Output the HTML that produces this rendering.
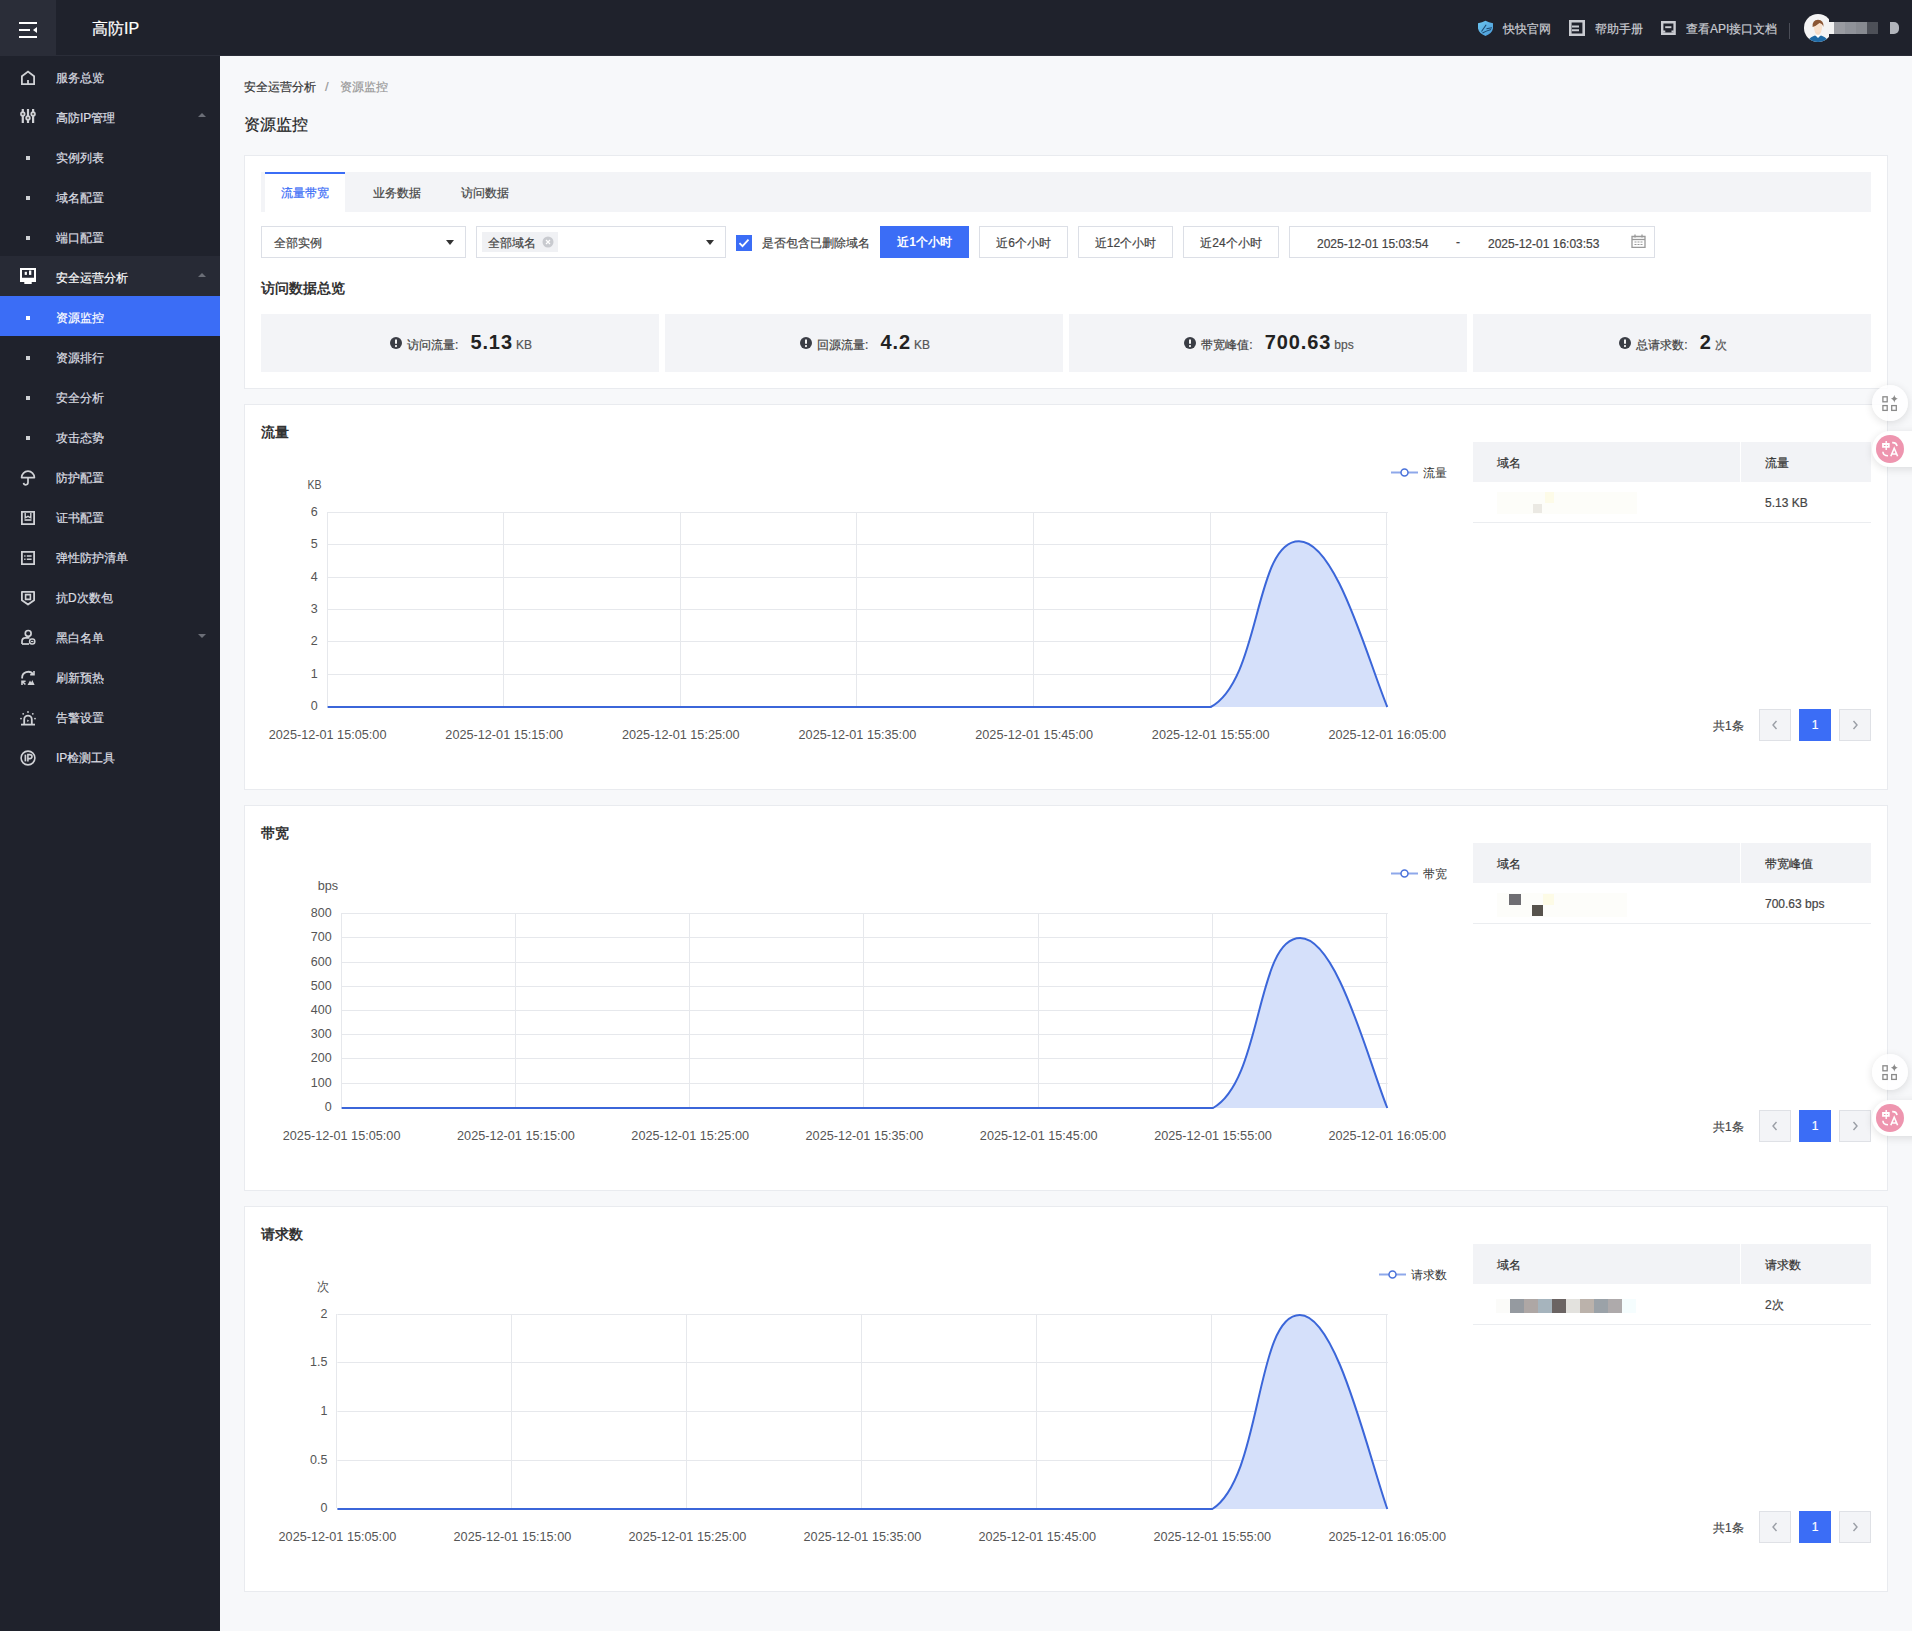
<!DOCTYPE html><html><head><meta charset="utf-8"><style>
*{margin:0;padding:0;box-sizing:border-box}
html,body{width:1912px;height:1631px;overflow:hidden}
body{-webkit-text-stroke:0.2px currentColor;background:#f7f8fa;font-family:"Liberation Sans",sans-serif;font-size:12px;color:#333;position:relative}
.a{position:absolute;white-space:nowrap}
.hdr{left:0;top:0;width:1912px;height:56px;background:#1f222c;border-bottom:1px solid #2a2d38}
.tog{left:0;top:0;width:56px;height:55px;background:#2a2d38}
.side{left:0;top:56px;width:220px;height:1575px;background:#1f222c}
.mi{left:56px;color:#dcdee2;font-size:12px;line-height:16px}
.bul{left:26px;width:4px;height:4px;background:#d0d2d6}
.caret{width:0;height:0;border-left:4px solid transparent;border-right:4px solid transparent}
.card{background:#fff;border:1px solid #e9ebef}
.t12{font-size:12px;line-height:16px}
.box{background:#fff;border:1px solid #dcdfe6}
.gray{background:#f3f4f7}
.nb{-webkit-text-stroke:0}
svg text{-webkit-text-stroke:0}
</style></head><body>
<div class="a hdr"></div>
<div class="a tog"></div>
<div class="a" style="left:19px;top:22px;width:18px;height:2px;background:#fff"></div>
<div class="a" style="left:19px;top:29px;width:11px;height:2px;background:#fff"></div>
<div class="a" style="left:19px;top:36px;width:18px;height:2px;background:#fff"></div>
<div class="a" style="left:33px;top:27px;width:0;height:0;border-top:3px solid transparent;border-bottom:3px solid transparent;border-right:4px solid #fff"></div>
<div class="a" style="left:92px;top:19px;font-size:16px;line-height:20px;color:#fff">高防IP</div>
<svg class="a" style="left:1477px;top:20px" width="17" height="17" viewBox="0 0 17 17"><defs><linearGradient id="sg" x1="0" y1="0" x2="1" y2="1"><stop offset="0" stop-color="#6cc6f0"/><stop offset="1" stop-color="#4a9ad8"/></linearGradient></defs><path d="M1 3.2L5 2.2 8.5 0.8 12 2.2 16 3.2V8.5Q15 13.5 8.5 16Q2 13.5 1 8.5Z" fill="url(#sg)"/><path d="M4.5 11.5L9.2 4.8M5.5 13Q9 11 14 9.5M9.5 8.8Q12 8.3 15 7.8" stroke="#1d4a70" stroke-width="1.1" fill="none"/></svg>
<div class="a t12" style="left:1503px;top:21px;color:#c9cbd1">快快官网</div>
<svg class="a" style="left:1569px;top:20px" width="16" height="16" viewBox="0 0 16 16"><path d="M1.3 1.3h13.4v13.4h-13.4z" stroke="#c9cbd1" stroke-width="2.6" fill="none"/><path d="M3 6.5h7M3 10.3h7" stroke="#c9cbd1" stroke-width="1.9"/></svg>
<div class="a t12" style="left:1595px;top:21px;color:#c9cbd1">帮助手册</div>
<svg class="a" style="left:1661px;top:21px" width="15" height="14" viewBox="0 0 15 14"><path d="M1.2 1.2h12.4v11.6h-12.4z" stroke="#c9cbd1" stroke-width="2.4" fill="none"/><path d="M4.2 6.2h6.2" stroke="#c9cbd1" stroke-width="1.9"/><path d="M2 10.6h2.3M10.5 10.6h2.3" stroke="#c9cbd1" stroke-width="2"/></svg>
<div class="a t12" style="left:1686px;top:21px;color:#c9cbd1">查看API接口文档</div>
<div class="a" style="left:1789px;top:23px;width:1px;height:16px;background:#4a4d57"></div>
<svg class="a" style="left:1804px;top:14px" width="28" height="28" viewBox="0 0 28 28"><defs><clipPath id="av"><circle cx="14" cy="14" r="14"/></clipPath></defs><g clip-path="url(#av)"><rect width="28" height="28" fill="#f4f4f4"/><path d="M3 29 Q5 22 14 21 Q23 22 25 29Z" fill="#1f6aa5"/><path d="M11 21 L14 24 L17 21Z" fill="#fff"/><path d="M10.5 15 Q10.5 20 14 21 Q17.5 20 17.5 15Z" fill="#f6dcc6"/><ellipse cx="14" cy="13" rx="4.2" ry="5.2" fill="#f8e1cd"/><path d="M8.6 13 Q8 6 14 5.8 Q20 6 19.4 13 Q18.5 9.5 15.5 9 Q12 12 8.6 13Z" fill="#8b5633"/></g></svg>
<div class="a" style="left:1829px;top:12px;width:6px;height:10px;background:#1f222c"></div><div class="a" style="left:1829px;top:34px;width:6px;height:10px;background:#1f222c"></div>
<div class="a" style="left:1827px;top:22px;width:7px;height:12px;background:#f3f3f3"></div>
<div class="a" style="left:1834px;top:22px;width:11px;height:12px;background:#999ba1"></div>
<div class="a" style="left:1845px;top:22px;width:11px;height:12px;background:#8f9299"></div>
<div class="a" style="left:1856px;top:22px;width:11px;height:12px;background:#878a91"></div>
<div class="a" style="left:1867px;top:22px;width:11px;height:12px;background:#4d5058"></div>
<div class="a" style="left:1890px;top:22px;width:9px;height:12px;background:#b1b4bb;border-radius:0 5px 5px 0"></div>
<div class="a side"></div>
<div class="a" style="left:0;top:256px;width:220px;height:40px;background:#272a35"></div>
<div class="a" style="left:0;top:296px;width:220px;height:40px;background:#3b6df6"></div>
<div class="a mi" style="top:70px;color:#dcdee2">服务总览</div>
<svg class="a" style="left:20px;top:70px" width="16" height="16" viewBox="0 0 16 16"><path d="M1.9 14.1V6.2L8 1.6L14.1 6.2V14.1Z" stroke="#d0d2d6" stroke-width="1.8" fill="none"/><path d="M8 14V10" stroke="#d0d2d6" stroke-width="1.8"/></svg>
<div class="a mi" style="top:110px;color:#dcdee2">高防IP管理</div>
<svg class="a" style="left:20px;top:108px" width="16" height="16" viewBox="0 0 16 16"><path d="M2.8 1v14M8 1v14M13.1 1v14" stroke="#d0d2d6" stroke-width="2.2"/><circle cx="2.8" cy="6" r="1.9" fill="#555" stroke="#d0d2d6" stroke-width="1.6"/><circle cx="8" cy="10" r="1.9" fill="#555" stroke="#d0d2d6" stroke-width="1.6"/><circle cx="13.1" cy="6" r="1.9" fill="#555" stroke="#d0d2d6" stroke-width="1.6"/></svg>
<div class="a caret" style="left:198px;top:113px;border-bottom:4px solid #6b6e77"></div>
<div class="a mi" style="top:150px;color:#dcdee2">实例列表</div>
<div class="a bul" style="top:156px"></div>
<div class="a mi" style="top:190px;color:#dcdee2">域名配置</div>
<div class="a bul" style="top:196px"></div>
<div class="a mi" style="top:230px;color:#dcdee2">端口配置</div>
<div class="a bul" style="top:236px"></div>
<div class="a mi" style="top:270px;color:#fff">安全运营分析</div>
<svg class="a" style="left:20px;top:268px" width="16" height="16" viewBox="0 0 16 16"><path d="M0 0h16v14h-16z M2 2v7.8h12v-7.8z" fill="#fff" fill-rule="evenodd"/><rect x="4.7" y="3.8" width="2.2" height="3.1" fill="#fff"/><rect x="9" y="2.5" width="2.3" height="4.4" fill="#fff"/><rect x="4.3" y="13" width="7.4" height="3" fill="#fff"/></svg>
<div class="a caret" style="left:198px;top:273px;border-bottom:4px solid #6b6e77"></div>
<div class="a mi" style="top:310px;color:#fff">资源监控</div>
<div class="a bul" style="top:316px;background:#fff"></div>
<div class="a mi" style="top:350px;color:#dcdee2">资源排行</div>
<div class="a bul" style="top:356px"></div>
<div class="a mi" style="top:390px;color:#dcdee2">安全分析</div>
<div class="a bul" style="top:396px"></div>
<div class="a mi" style="top:430px;color:#dcdee2">攻击态势</div>
<div class="a bul" style="top:436px"></div>
<div class="a mi" style="top:470px;color:#dcdee2">防护配置</div>
<svg class="a" style="left:20px;top:470px" width="16" height="16" viewBox="0 0 16 16"><path d="M1.6 7.6 A6.4 6.4 0 0 1 14.4 7.6 Z" stroke="#d0d2d6" stroke-width="1.7" fill="none" stroke-linejoin="round"/><path d="M8 7.6V12.6 Q8 14.8 5.8 14.8 Q3.8 14.8 3.6 12.8" stroke="#d0d2d6" stroke-width="1.7" fill="none"/></svg>
<div class="a mi" style="top:510px;color:#dcdee2">证书配置</div>
<svg class="a" style="left:20px;top:510px" width="16" height="16" viewBox="0 0 16 16"><path d="M1.9 1.9h12.2v12.2h-12.2z" stroke="#d0d2d6" stroke-width="1.8" fill="none"/><path d="M5.2 3V7.8L8 6.3L10.8 7.8V3" stroke="#d0d2d6" stroke-width="1.4" fill="none"/><path d="M4.5 10h7" stroke="#d0d2d6" stroke-width="1.6"/></svg>
<div class="a mi" style="top:550px;color:#dcdee2">弹性防护清单</div>
<svg class="a" style="left:20px;top:550px" width="16" height="16" viewBox="0 0 16 16"><path d="M1.9 1.9h12.2v12.2h-12.2z" stroke="#d0d2d6" stroke-width="1.8" fill="none"/><path d="M4.2 6h1.3M6.8 6h4.8M4.2 9.3h1.3M6.8 9.3h4.8" stroke="#d0d2d6" stroke-width="1.6"/></svg>
<div class="a mi" style="top:590px;color:#dcdee2">抗D次数包</div>
<svg class="a" style="left:20px;top:590px" width="16" height="16" viewBox="0 0 16 16"><path d="M1.9 1.9H14.1V10.2L8 14.6L1.9 10.2Z" stroke="#d0d2d6" stroke-width="1.8" fill="none" stroke-linejoin="round"/><path d="M5.6 4.6h4.8v4.8h-4.8z" stroke="#d0d2d6" stroke-width="1.6" fill="none"/></svg>
<div class="a mi" style="top:630px;color:#dcdee2">黑白名单</div>
<svg class="a" style="left:20px;top:629px" width="16" height="16" viewBox="0 0 16 16"><circle cx="8.2" cy="4.4" r="2.9" stroke="#d0d2d6" stroke-width="1.7" fill="none"/><path d="M2 15V12.2 Q2 8.8 5.5 8.8H9.5" stroke="#d0d2d6" stroke-width="1.7" fill="none"/><path d="M2 15h7" stroke="#d0d2d6" stroke-width="1.7"/><rect x="9.6" y="10" width="5.2" height="5" rx="2.2" stroke="#d0d2d6" stroke-width="1.5" fill="none"/><path d="M11 12.5h2.4" stroke="#d0d2d6" stroke-width="1.2"/></svg>
<div class="a caret" style="left:198px;top:634px;border-top:4px solid #6b6e77"></div>
<div class="a mi" style="top:670px;color:#dcdee2">刷新预热</div>
<svg class="a" style="left:20px;top:670px" width="16" height="16" viewBox="0 0 16 16"><path d="M2.2 8.5 A6 6 0 0 1 13.2 4.6" stroke="#d0d2d6" stroke-width="1.8" fill="none"/><path d="M10.2 4.6h3.8V1" stroke="#d0d2d6" stroke-width="1.6" fill="none"/><path d="M2 15V11.2h3.6M2.4 11.5l3 3" stroke="#d0d2d6" stroke-width="1.6" fill="none"/><path d="M7.5 15L10 10.5 11.2 12.5 12.3 10 14.6 15Z" fill="#d0d2d6"/></svg>
<div class="a mi" style="top:710px;color:#dcdee2">告警设置</div>
<svg class="a" style="left:20px;top:710px" width="16" height="16" viewBox="0 0 16 16"><path d="M4.2 14V9.4 A3.8 3.8 0 0 1 11.8 9.4V14" stroke="#d0d2d6" stroke-width="1.8" fill="none"/><path d="M1 14.6h14" stroke="#d0d2d6" stroke-width="1.8"/><circle cx="8" cy="2" r="0.9" fill="#d0d2d6"/><circle cx="3.2" cy="3.8" r="0.9" fill="#d0d2d6"/><circle cx="12.8" cy="3.8" r="0.9" fill="#d0d2d6"/><circle cx="1" cy="8.6" r="0.9" fill="#d0d2d6"/><circle cx="15" cy="8.6" r="0.9" fill="#d0d2d6"/><path d="M7.2 9.5l2 1.2-2 1.2z" fill="#d0d2d6"/></svg>
<div class="a mi" style="top:750px;color:#dcdee2">IP检测工具</div>
<svg class="a" style="left:20px;top:750px" width="16" height="16" viewBox="0 0 16 16"><circle cx="8" cy="8" r="6.9" stroke="#d0d2d6" stroke-width="1.6" fill="none"/><path d="M5.4 4.6v6.8" stroke="#d0d2d6" stroke-width="1.7"/><path d="M7.9 11.4V4.6h1.9 Q12 4.6 12 6.6 Q12 8.6 9.8 8.6H7.9" stroke="#d0d2d6" stroke-width="1.6" fill="none"/></svg>
<div class="a t12" style="left:244px;top:79px;color:#333">安全运营分析</div>
<div class="a t12" style="left:325px;top:79px;color:#999;font-size:13px">/</div>
<div class="a t12" style="left:340px;top:79px;color:#999">资源监控</div>
<div class="a" style="left:244px;top:115px;font-size:16px;line-height:20px;color:#222">资源监控</div>
<div class="a card" style="left:244px;top:155px;width:1644px;height:234px"></div>
<div class="a gray" style="left:261px;top:172px;width:1610px;height:40px"></div>
<div class="a" style="left:265px;top:172px;width:80px;height:40px;background:#fff;border-top:2px solid #3b6df6"></div>
<div class="a t12" style="left:281px;top:185px;color:#3b6df6">流量带宽</div>
<div class="a t12" style="left:373px;top:185px;color:#444">业务数据</div>
<div class="a t12" style="left:461px;top:185px;color:#444">访问数据</div>
<div class="a box" style="left:261px;top:226px;width:205px;height:32px"></div>
<div class="a t12" style="left:274px;top:235px;color:#444">全部实例</div>
<div class="a caret" style="left:446px;top:240px;border-top:5px solid #333"></div>
<div class="a box" style="left:476px;top:226px;width:250px;height:32px"></div>
<div class="a" style="left:482px;top:232px;width:76px;height:20px;background:#f0f1f4"></div>
<div class="a t12" style="left:488px;top:235px;color:#444">全部域名</div>
<svg class="a" style="left:542px;top:236px" width="12" height="12" viewBox="0 0 12 12"><circle cx="6" cy="6" r="5.5" fill="#c8cacf"/><path d="M4 4l4 4M8 4l-4 4" stroke="#fff" stroke-width="1.2"/></svg>
<div class="a caret" style="left:706px;top:240px;border-top:5px solid #333"></div>
<svg class="a" style="left:736px;top:235px" width="16" height="16" viewBox="0 0 16 16"><rect width="16" height="16" fill="#3b6df6"/><path d="M3.5 8.2l3 3 6-6.5" stroke="#fff" stroke-width="1.8" fill="none"/></svg>
<div class="a t12" style="left:762px;top:235px;color:#444">是否包含已删除域名</div>
<div class="a t12" style="left:880px;top:226px;width:89px;height:32px;background:#3b6df6;color:#fff;font-weight:bold;-webkit-text-stroke:0;text-align:center;line-height:33px">近1个小时</div>
<div class="a box t12" style="left:979px;top:226px;width:89px;height:32px;color:#444;text-align:center;line-height:32px">近6个小时</div>
<div class="a box t12" style="left:1078px;top:226px;width:95px;height:32px;color:#444;text-align:center;line-height:32px">近12个小时</div>
<div class="a box t12" style="left:1183px;top:226px;width:96px;height:32px;color:#444;text-align:center;line-height:32px">近24个小时</div>
<div class="a box" style="left:1289px;top:226px;width:366px;height:32px"></div>
<div class="a t12" style="left:1317px;top:236px;color:#444">2025-12-01 15:03:54</div>
<div class="a t12" style="left:1456px;top:234px;color:#444">-</div>
<div class="a t12" style="left:1488px;top:236px;color:#444">2025-12-01 16:03:53</div>
<svg class="a" style="left:1631px;top:234px" width="15" height="14" viewBox="0 0 15 14"><path d="M1 2.5h13v11h-13z" stroke="#999" stroke-width="1.3" fill="none"/><path d="M1 5.5h13" stroke="#999" stroke-width="1.3"/><path d="M4 0.5v3M11 0.5v3" stroke="#999" stroke-width="1.3"/><path d="M3.5 8h2M6.5 8h2M9.5 8h2M3.5 10.5h2M6.5 10.5h2M9.5 10.5h2" stroke="#999" stroke-width="1"/></svg>
<div class="a" style="left:261px;top:279px;font-size:14px;line-height:18px;font-weight:bold;color:#333;-webkit-text-stroke:0">访问数据总览</div>
<div class="a gray" style="left:261px;top:314px;width:398px;height:58px"></div>
<div class="a" style="left:262px;top:329.5px;width:398px;height:24px;display:flex;align-items:baseline;justify-content:center;line-height:24px"><svg width="12" height="12" viewBox="0 0 12 12" style="margin-right:5px;align-self:center;margin-top:3px"><circle cx="6" cy="6" r="6" fill="#3a3d45"/><path d="M6 2.4v4.4" stroke="#fff" stroke-width="1.9"/><circle cx="6" cy="9.1" r="1.05" fill="#fff"/></svg><span style="font-size:12px;color:#444">访问流量:</span><span style="font-size:20px;font-weight:bold;color:#222;-webkit-text-stroke:0;margin-left:12px;letter-spacing:0.9px">5.13</span><span style="font-size:12px;color:#555;margin-left:3px">KB</span></div>
<div class="a gray" style="left:665px;top:314px;width:398px;height:58px"></div>
<div class="a" style="left:666px;top:329.5px;width:398px;height:24px;display:flex;align-items:baseline;justify-content:center;line-height:24px"><svg width="12" height="12" viewBox="0 0 12 12" style="margin-right:5px;align-self:center;margin-top:3px"><circle cx="6" cy="6" r="6" fill="#3a3d45"/><path d="M6 2.4v4.4" stroke="#fff" stroke-width="1.9"/><circle cx="6" cy="9.1" r="1.05" fill="#fff"/></svg><span style="font-size:12px;color:#444">回源流量:</span><span style="font-size:20px;font-weight:bold;color:#222;-webkit-text-stroke:0;margin-left:12px;letter-spacing:0.9px">4.2</span><span style="font-size:12px;color:#555;margin-left:3px">KB</span></div>
<div class="a gray" style="left:1069px;top:314px;width:398px;height:58px"></div>
<div class="a" style="left:1070px;top:329.5px;width:398px;height:24px;display:flex;align-items:baseline;justify-content:center;line-height:24px"><svg width="12" height="12" viewBox="0 0 12 12" style="margin-right:5px;align-self:center;margin-top:3px"><circle cx="6" cy="6" r="6" fill="#3a3d45"/><path d="M6 2.4v4.4" stroke="#fff" stroke-width="1.9"/><circle cx="6" cy="9.1" r="1.05" fill="#fff"/></svg><span style="font-size:12px;color:#444">带宽峰值:</span><span style="font-size:20px;font-weight:bold;color:#222;-webkit-text-stroke:0;margin-left:12px;letter-spacing:0.9px">700.63</span><span style="font-size:12px;color:#555;margin-left:3px">bps</span></div>
<div class="a gray" style="left:1473px;top:314px;width:398px;height:58px"></div>
<div class="a" style="left:1474px;top:329.5px;width:398px;height:24px;display:flex;align-items:baseline;justify-content:center;line-height:24px"><svg width="12" height="12" viewBox="0 0 12 12" style="margin-right:5px;align-self:center;margin-top:3px"><circle cx="6" cy="6" r="6" fill="#3a3d45"/><path d="M6 2.4v4.4" stroke="#fff" stroke-width="1.9"/><circle cx="6" cy="9.1" r="1.05" fill="#fff"/></svg><span style="font-size:12px;color:#444">总请求数:</span><span style="font-size:20px;font-weight:bold;color:#222;-webkit-text-stroke:0;margin-left:12px;letter-spacing:0.9px">2</span><span style="font-size:12px;color:#555;margin-left:3px">次</span></div>
<div class="a card" style="left:244px;top:404px;width:1644px;height:386px"></div>
<div class="a" style="left:261px;top:423px;font-size:14px;line-height:18px;font-weight:bold;color:#333;-webkit-text-stroke:0">流量</div>
<svg class="a" style="left:244px;top:405px" width="1240" height="385" viewBox="244 405 1240 385">
<path d="M327.6 512.5H1387.8" stroke="#e6e8ec" stroke-width="1"/>
<path d="M327.6 544.5H1387.8" stroke="#e6e8ec" stroke-width="1"/>
<path d="M327.6 577.5H1387.8" stroke="#e6e8ec" stroke-width="1"/>
<path d="M327.6 609.5H1387.8" stroke="#e6e8ec" stroke-width="1"/>
<path d="M327.6 641.5H1387.8" stroke="#e6e8ec" stroke-width="1"/>
<path d="M327.6 674.5H1387.8" stroke="#e6e8ec" stroke-width="1"/>
<path d="M327.6 706.5H1387.8" stroke="#e6e8ec" stroke-width="1"/>
<path d="M327.5 512.0V706.0" stroke="#e6e8ec" stroke-width="1"/>
<path d="M503.5 512.0V706.0" stroke="#e6e8ec" stroke-width="1"/>
<path d="M680.5 512.0V706.0" stroke="#e6e8ec" stroke-width="1"/>
<path d="M856.5 512.0V706.0" stroke="#e6e8ec" stroke-width="1"/>
<path d="M1033.5 512.0V706.0" stroke="#e6e8ec" stroke-width="1"/>
<path d="M1210.5 512.0V706.0" stroke="#e6e8ec" stroke-width="1"/>
<path d="M1386.5 512.0V706.0" stroke="#e6e8ec" stroke-width="1"/>
<text x="317.6" y="709.8" text-anchor="end" font-family="Liberation Sans" font-size="12.5" fill="#555">0</text>
<text x="317.6" y="677.8" text-anchor="end" font-family="Liberation Sans" font-size="12.5" fill="#555">1</text>
<text x="317.6" y="644.8" text-anchor="end" font-family="Liberation Sans" font-size="12.5" fill="#555">2</text>
<text x="317.6" y="612.8" text-anchor="end" font-family="Liberation Sans" font-size="12.5" fill="#555">3</text>
<text x="317.6" y="580.8" text-anchor="end" font-family="Liberation Sans" font-size="12.5" fill="#555">4</text>
<text x="317.6" y="547.8" text-anchor="end" font-family="Liberation Sans" font-size="12.5" fill="#555">5</text>
<text x="317.6" y="515.8" text-anchor="end" font-family="Liberation Sans" font-size="12.5" fill="#555">6</text>
<text x="327.6" y="738.5" text-anchor="middle" font-family="Liberation Sans" font-size="12.5" fill="#555" textLength="117.7" lengthAdjust="spacingAndGlyphs">2025-12-01 15:05:00</text>
<text x="504.2" y="738.5" text-anchor="middle" font-family="Liberation Sans" font-size="12.5" fill="#555" textLength="117.7" lengthAdjust="spacingAndGlyphs">2025-12-01 15:15:00</text>
<text x="680.8" y="738.5" text-anchor="middle" font-family="Liberation Sans" font-size="12.5" fill="#555" textLength="117.7" lengthAdjust="spacingAndGlyphs">2025-12-01 15:25:00</text>
<text x="857.4" y="738.5" text-anchor="middle" font-family="Liberation Sans" font-size="12.5" fill="#555" textLength="117.7" lengthAdjust="spacingAndGlyphs">2025-12-01 15:35:00</text>
<text x="1034.1" y="738.5" text-anchor="middle" font-family="Liberation Sans" font-size="12.5" fill="#555" textLength="117.7" lengthAdjust="spacingAndGlyphs">2025-12-01 15:45:00</text>
<text x="1210.7" y="738.5" text-anchor="middle" font-family="Liberation Sans" font-size="12.5" fill="#555" textLength="117.7" lengthAdjust="spacingAndGlyphs">2025-12-01 15:55:00</text>
<text x="1387.3" y="738.5" text-anchor="middle" font-family="Liberation Sans" font-size="12.5" fill="#555" textLength="117.7" lengthAdjust="spacingAndGlyphs">2025-12-01 16:05:00</text>
<text x="307.5" y="489" font-family="Liberation Sans" font-size="12.5" fill="#555" textLength="14.1" lengthAdjust="spacingAndGlyphs">KB</text>
<path d="M1210.68,707.00 C1261.27,679.66 1253.93,541.13 1298.99,541.13 C1336.04,541.13 1366.98,657.59 1387.30,707.00 Z" fill="#d5e0fa"/>
<path d="M327.6,707.00 L1210.68,707.00 1210.68,707.00 C1261.27,679.66 1253.93,541.13 1298.99,541.13 C1336.04,541.13 1366.98,657.59 1387.30,707.00" stroke="#3b66d9" stroke-width="2" fill="none"/>
<path d="M1391 472.5h27" stroke="#8ea8ea" stroke-width="2"/>
<circle cx="1404.5" cy="472.5" r="3.5" fill="#fff" stroke="#4a72da" stroke-width="1.5"/>
<text x="1423" y="477.0" font-family="Liberation Sans" font-size="12" fill="#333">流量</text>
</svg>
<div class="a" style="left:1473px;top:442px;width:398px;height:40px;background:#f2f3f6"></div>
<div class="a" style="left:1740px;top:442px;width:1px;height:80px;background:#fff"></div>
<div class="a t12" style="left:1497px;top:455px;color:#333">域名</div>
<div class="a t12" style="left:1765px;top:455px;color:#333">流量</div>
<div class="a" style="left:1473px;top:522px;width:398px;height:1px;background:#ebedf0"></div>
<div class="a t12" style="left:1765px;top:495px;color:#444">5.13 KB</div>
<div class="a" style="left:1497px;top:492px;width:140px;height:22px;background:#fdfdf9"></div><div class="a" style="left:1533px;top:504px;width:9px;height:9px;background:#ebe9e3"></div><div class="a" style="left:1545px;top:492px;width:9px;height:11px;background:#fdfbe8"></div>
<div class="a t12" style="left:1713px;top:718px;color:#444">共1条</div>
<div class="a" style="left:1759px;top:709px;width:32px;height:32px;background:#f3f4f7;border:1px solid #dfe1e6"></div>
<svg class="a" style="left:1770px;top:720px" width="10" height="10" viewBox="0 0 10 10"><path d="M6.5 1L3 5l3.5 4" stroke="#9a9ea6" stroke-width="1.4" fill="none"/></svg>
<div class="a t12" style="left:1799px;top:709px;width:32px;height:32px;background:#3b6df6;color:#fff;text-align:center;line-height:32px">1</div>
<div class="a" style="left:1839px;top:709px;width:32px;height:32px;background:#f3f4f7;border:1px solid #dfe1e6"></div>
<svg class="a" style="left:1850px;top:720px" width="10" height="10" viewBox="0 0 10 10"><path d="M3.5 1L7 5l-3.5 4" stroke="#9a9ea6" stroke-width="1.4" fill="none"/></svg>
<div class="a card" style="left:244px;top:805px;width:1644px;height:386px"></div>
<div class="a" style="left:261px;top:824px;font-size:14px;line-height:18px;font-weight:bold;color:#333;-webkit-text-stroke:0">带宽</div>
<svg class="a" style="left:244px;top:806px" width="1240" height="385" viewBox="244 806 1240 385">
<path d="M341.6 913.5H1387.8" stroke="#e6e8ec" stroke-width="1"/>
<path d="M341.6 937.5H1387.8" stroke="#e6e8ec" stroke-width="1"/>
<path d="M341.6 962.5H1387.8" stroke="#e6e8ec" stroke-width="1"/>
<path d="M341.6 986.5H1387.8" stroke="#e6e8ec" stroke-width="1"/>
<path d="M341.6 1010.5H1387.8" stroke="#e6e8ec" stroke-width="1"/>
<path d="M341.6 1034.5H1387.8" stroke="#e6e8ec" stroke-width="1"/>
<path d="M341.6 1058.5H1387.8" stroke="#e6e8ec" stroke-width="1"/>
<path d="M341.6 1083.5H1387.8" stroke="#e6e8ec" stroke-width="1"/>
<path d="M341.6 1107.5H1387.8" stroke="#e6e8ec" stroke-width="1"/>
<path d="M341.5 913.0V1107.0" stroke="#e6e8ec" stroke-width="1"/>
<path d="M515.5 913.0V1107.0" stroke="#e6e8ec" stroke-width="1"/>
<path d="M689.5 913.0V1107.0" stroke="#e6e8ec" stroke-width="1"/>
<path d="M863.5 913.0V1107.0" stroke="#e6e8ec" stroke-width="1"/>
<path d="M1038.5 913.0V1107.0" stroke="#e6e8ec" stroke-width="1"/>
<path d="M1212.5 913.0V1107.0" stroke="#e6e8ec" stroke-width="1"/>
<path d="M1386.5 913.0V1107.0" stroke="#e6e8ec" stroke-width="1"/>
<text x="331.6" y="1110.8" text-anchor="end" font-family="Liberation Sans" font-size="12.5" fill="#555">0</text>
<text x="331.6" y="1086.8" text-anchor="end" font-family="Liberation Sans" font-size="12.5" fill="#555">100</text>
<text x="331.6" y="1061.8" text-anchor="end" font-family="Liberation Sans" font-size="12.5" fill="#555">200</text>
<text x="331.6" y="1037.8" text-anchor="end" font-family="Liberation Sans" font-size="12.5" fill="#555">300</text>
<text x="331.6" y="1013.8" text-anchor="end" font-family="Liberation Sans" font-size="12.5" fill="#555">400</text>
<text x="331.6" y="989.8" text-anchor="end" font-family="Liberation Sans" font-size="12.5" fill="#555">500</text>
<text x="331.6" y="965.8" text-anchor="end" font-family="Liberation Sans" font-size="12.5" fill="#555">600</text>
<text x="331.6" y="940.8" text-anchor="end" font-family="Liberation Sans" font-size="12.5" fill="#555">700</text>
<text x="331.6" y="916.8" text-anchor="end" font-family="Liberation Sans" font-size="12.5" fill="#555">800</text>
<text x="341.6" y="1139.5" text-anchor="middle" font-family="Liberation Sans" font-size="12.5" fill="#555" textLength="117.7" lengthAdjust="spacingAndGlyphs">2025-12-01 15:05:00</text>
<text x="515.9" y="1139.5" text-anchor="middle" font-family="Liberation Sans" font-size="12.5" fill="#555" textLength="117.7" lengthAdjust="spacingAndGlyphs">2025-12-01 15:15:00</text>
<text x="690.2" y="1139.5" text-anchor="middle" font-family="Liberation Sans" font-size="12.5" fill="#555" textLength="117.7" lengthAdjust="spacingAndGlyphs">2025-12-01 15:25:00</text>
<text x="864.4" y="1139.5" text-anchor="middle" font-family="Liberation Sans" font-size="12.5" fill="#555" textLength="117.7" lengthAdjust="spacingAndGlyphs">2025-12-01 15:35:00</text>
<text x="1038.7" y="1139.5" text-anchor="middle" font-family="Liberation Sans" font-size="12.5" fill="#555" textLength="117.7" lengthAdjust="spacingAndGlyphs">2025-12-01 15:45:00</text>
<text x="1213.0" y="1139.5" text-anchor="middle" font-family="Liberation Sans" font-size="12.5" fill="#555" textLength="117.7" lengthAdjust="spacingAndGlyphs">2025-12-01 15:55:00</text>
<text x="1387.3" y="1139.5" text-anchor="middle" font-family="Liberation Sans" font-size="12.5" fill="#555" textLength="117.7" lengthAdjust="spacingAndGlyphs">2025-12-01 16:05:00</text>
<text x="317.7" y="890" font-family="Liberation Sans" font-size="12.5" fill="#555" textLength="20.4" lengthAdjust="spacingAndGlyphs">bps</text>
<path d="M1213.02,1108.00 C1262.93,1080.00 1255.69,938.10 1300.16,938.10 C1336.72,938.10 1367.25,1057.38 1387.30,1108.00 Z" fill="#d5e0fa"/>
<path d="M341.6,1108.00 L1213.02,1108.00 1213.02,1108.00 C1262.93,1080.00 1255.69,938.10 1300.16,938.10 C1336.72,938.10 1367.25,1057.38 1387.30,1108.00" stroke="#3b66d9" stroke-width="2" fill="none"/>
<path d="M1391 873.5h27" stroke="#8ea8ea" stroke-width="2"/>
<circle cx="1404.5" cy="873.5" r="3.5" fill="#fff" stroke="#4a72da" stroke-width="1.5"/>
<text x="1423" y="878.0" font-family="Liberation Sans" font-size="12" fill="#333">带宽</text>
</svg>
<div class="a" style="left:1473px;top:843px;width:398px;height:40px;background:#f2f3f6"></div>
<div class="a" style="left:1740px;top:843px;width:1px;height:80px;background:#fff"></div>
<div class="a t12" style="left:1497px;top:856px;color:#333">域名</div>
<div class="a t12" style="left:1765px;top:856px;color:#333">带宽峰值</div>
<div class="a" style="left:1473px;top:923px;width:398px;height:1px;background:#ebedf0"></div>
<div class="a t12" style="left:1765px;top:896px;color:#444">700.63 bps</div>
<div class="a" style="left:1497px;top:893px;width:130px;height:24px;background:#fdfdfa"></div><div class="a" style="left:1509px;top:894px;width:12px;height:11px;background:#6f6e73"></div><div class="a" style="left:1532px;top:905px;width:11px;height:11px;background:#57534d"></div><div class="a" style="left:1543px;top:894px;width:11px;height:11px;background:#fdfbe6"></div>
<div class="a t12" style="left:1713px;top:1119px;color:#444">共1条</div>
<div class="a" style="left:1759px;top:1110px;width:32px;height:32px;background:#f3f4f7;border:1px solid #dfe1e6"></div>
<svg class="a" style="left:1770px;top:1121px" width="10" height="10" viewBox="0 0 10 10"><path d="M6.5 1L3 5l3.5 4" stroke="#9a9ea6" stroke-width="1.4" fill="none"/></svg>
<div class="a t12" style="left:1799px;top:1110px;width:32px;height:32px;background:#3b6df6;color:#fff;text-align:center;line-height:32px">1</div>
<div class="a" style="left:1839px;top:1110px;width:32px;height:32px;background:#f3f4f7;border:1px solid #dfe1e6"></div>
<svg class="a" style="left:1850px;top:1121px" width="10" height="10" viewBox="0 0 10 10"><path d="M3.5 1L7 5l-3.5 4" stroke="#9a9ea6" stroke-width="1.4" fill="none"/></svg>
<div class="a card" style="left:244px;top:1206px;width:1644px;height:386px"></div>
<div class="a" style="left:261px;top:1225px;font-size:14px;line-height:18px;font-weight:bold;color:#333;-webkit-text-stroke:0">请求数</div>
<svg class="a" style="left:244px;top:1207px" width="1240" height="385" viewBox="244 1207 1240 385">
<path d="M337.4 1314.5H1387.8" stroke="#e6e8ec" stroke-width="1"/>
<path d="M337.4 1362.5H1387.8" stroke="#e6e8ec" stroke-width="1"/>
<path d="M337.4 1411.5H1387.8" stroke="#e6e8ec" stroke-width="1"/>
<path d="M337.4 1460.5H1387.8" stroke="#e6e8ec" stroke-width="1"/>
<path d="M337.4 1508.5H1387.8" stroke="#e6e8ec" stroke-width="1"/>
<path d="M336.5 1314.0V1508.0" stroke="#e6e8ec" stroke-width="1"/>
<path d="M511.5 1314.0V1508.0" stroke="#e6e8ec" stroke-width="1"/>
<path d="M686.5 1314.0V1508.0" stroke="#e6e8ec" stroke-width="1"/>
<path d="M861.5 1314.0V1508.0" stroke="#e6e8ec" stroke-width="1"/>
<path d="M1036.5 1314.0V1508.0" stroke="#e6e8ec" stroke-width="1"/>
<path d="M1211.5 1314.0V1508.0" stroke="#e6e8ec" stroke-width="1"/>
<path d="M1386.5 1314.0V1508.0" stroke="#e6e8ec" stroke-width="1"/>
<text x="327.4" y="1511.8" text-anchor="end" font-family="Liberation Sans" font-size="12.5" fill="#555">0</text>
<text x="327.4" y="1463.8" text-anchor="end" font-family="Liberation Sans" font-size="12.5" fill="#555">0.5</text>
<text x="327.4" y="1414.8" text-anchor="end" font-family="Liberation Sans" font-size="12.5" fill="#555">1</text>
<text x="327.4" y="1365.8" text-anchor="end" font-family="Liberation Sans" font-size="12.5" fill="#555">1.5</text>
<text x="327.4" y="1317.8" text-anchor="end" font-family="Liberation Sans" font-size="12.5" fill="#555">2</text>
<text x="337.4" y="1540.5" text-anchor="middle" font-family="Liberation Sans" font-size="12.5" fill="#555" textLength="117.7" lengthAdjust="spacingAndGlyphs">2025-12-01 15:05:00</text>
<text x="512.4" y="1540.5" text-anchor="middle" font-family="Liberation Sans" font-size="12.5" fill="#555" textLength="117.7" lengthAdjust="spacingAndGlyphs">2025-12-01 15:15:00</text>
<text x="687.4" y="1540.5" text-anchor="middle" font-family="Liberation Sans" font-size="12.5" fill="#555" textLength="117.7" lengthAdjust="spacingAndGlyphs">2025-12-01 15:25:00</text>
<text x="862.4" y="1540.5" text-anchor="middle" font-family="Liberation Sans" font-size="12.5" fill="#555" textLength="117.7" lengthAdjust="spacingAndGlyphs">2025-12-01 15:35:00</text>
<text x="1037.3" y="1540.5" text-anchor="middle" font-family="Liberation Sans" font-size="12.5" fill="#555" textLength="117.7" lengthAdjust="spacingAndGlyphs">2025-12-01 15:45:00</text>
<text x="1212.3" y="1540.5" text-anchor="middle" font-family="Liberation Sans" font-size="12.5" fill="#555" textLength="117.7" lengthAdjust="spacingAndGlyphs">2025-12-01 15:55:00</text>
<text x="1387.3" y="1540.5" text-anchor="middle" font-family="Liberation Sans" font-size="12.5" fill="#555" textLength="117.7" lengthAdjust="spacingAndGlyphs">2025-12-01 16:05:00</text>
<text x="316.5" y="1291" font-family="Liberation Sans" font-size="12.5" fill="#555" textLength="12.3" lengthAdjust="spacingAndGlyphs">次</text>
<path d="M1212.32,1509.00 C1262.43,1477.03 1255.16,1315.00 1299.81,1315.00 C1336.52,1315.00 1367.16,1451.21 1387.30,1509.00 Z" fill="#d5e0fa"/>
<path d="M337.4,1509.00 L1212.32,1509.00 1212.32,1509.00 C1262.43,1477.03 1255.16,1315.00 1299.81,1315.00 C1336.52,1315.00 1367.16,1451.21 1387.30,1509.00" stroke="#3b66d9" stroke-width="2" fill="none"/>
<path d="M1379 1274.5h27" stroke="#8ea8ea" stroke-width="2"/>
<circle cx="1392.5" cy="1274.5" r="3.5" fill="#fff" stroke="#4a72da" stroke-width="1.5"/>
<text x="1411" y="1279.0" font-family="Liberation Sans" font-size="12" fill="#333">请求数</text>
</svg>
<div class="a" style="left:1473px;top:1244px;width:398px;height:40px;background:#f2f3f6"></div>
<div class="a" style="left:1740px;top:1244px;width:1px;height:80px;background:#fff"></div>
<div class="a t12" style="left:1497px;top:1257px;color:#333">域名</div>
<div class="a t12" style="left:1765px;top:1257px;color:#333">请求数</div>
<div class="a" style="left:1473px;top:1324px;width:398px;height:1px;background:#ebedf0"></div>
<div class="a t12" style="left:1765px;top:1297px;color:#444">2次</div>
<div class="a" style="left:1496px;top:1299px;width:14px;height:14px;background:#fbfbf9"></div><div class="a" style="left:1510px;top:1299px;width:14px;height:14px;background:#959aa0"></div><div class="a" style="left:1524px;top:1299px;width:14px;height:14px;background:#aea7a5"></div><div class="a" style="left:1538px;top:1299px;width:14px;height:14px;background:#a6b4bd"></div><div class="a" style="left:1552px;top:1299px;width:14px;height:14px;background:#6b6463"></div><div class="a" style="left:1566px;top:1299px;width:14px;height:14px;background:#e3e2de"></div><div class="a" style="left:1580px;top:1299px;width:14px;height:14px;background:#bbb2ab"></div><div class="a" style="left:1594px;top:1299px;width:14px;height:14px;background:#9ba2a8"></div><div class="a" style="left:1608px;top:1299px;width:14px;height:14px;background:#aeaaab"></div><div class="a" style="left:1622px;top:1299px;width:14px;height:14px;background:#f5fdfe"></div>
<div class="a t12" style="left:1713px;top:1520px;color:#444">共1条</div>
<div class="a" style="left:1759px;top:1511px;width:32px;height:32px;background:#f3f4f7;border:1px solid #dfe1e6"></div>
<svg class="a" style="left:1770px;top:1522px" width="10" height="10" viewBox="0 0 10 10"><path d="M6.5 1L3 5l3.5 4" stroke="#9a9ea6" stroke-width="1.4" fill="none"/></svg>
<div class="a t12" style="left:1799px;top:1511px;width:32px;height:32px;background:#3b6df6;color:#fff;text-align:center;line-height:32px">1</div>
<div class="a" style="left:1839px;top:1511px;width:32px;height:32px;background:#f3f4f7;border:1px solid #dfe1e6"></div>
<svg class="a" style="left:1850px;top:1522px" width="10" height="10" viewBox="0 0 10 10"><path d="M3.5 1L7 5l-3.5 4" stroke="#9a9ea6" stroke-width="1.4" fill="none"/></svg>
<div class="a" style="left:1872px;top:431px;width:60px;height:36px;border-radius:18px 0 0 18px;background:#fff;box-shadow:0 2px 8px rgba(0,0,0,0.12)"></div>
<div class="a" style="left:1872px;top:385px;width:36px;height:36px;border-radius:18px;background:rgba(255,255,255,0.85);box-shadow:0 2px 8px rgba(0,0,0,0.12)"></div>
<svg class="a" style="left:1882px;top:395px" width="17" height="17" viewBox="0 0 17 17"><rect x="0.9" y="1.8" width="4.3" height="5" stroke="#8a8a8a" stroke-width="1.3" fill="none"/><rect x="0.9" y="10.6" width="4.3" height="4.8" stroke="#8a8a8a" stroke-width="1.3" fill="none"/><rect x="9.7" y="10.6" width="4.6" height="4.8" stroke="#8a8a8a" stroke-width="1.3" fill="none"/><path d="M12.3 -0.3 Q12.8 3.2 15.8 3.7 Q12.8 4.2 12.3 7.7 Q11.8 4.2 8.8 3.7 Q11.8 3.2 12.3 -0.3Z" fill="#8a8a8a"/></svg>
<div class="a" style="left:1876px;top:435px;width:28px;height:28px;border-radius:14px;background:#ee95af"></div>
<svg class="a" style="left:1880px;top:439px" width="20" height="20" viewBox="0 0 20 20"><path d="M3 5h5.8v2.8H3z" stroke="#fff" stroke-width="1.8" fill="none"/><path d="M6.2 2.1v9" stroke="#fff" stroke-width="1.4"/><path d="M12.2 3.6 Q16.6 3.4 17 7.2" stroke="#fff" stroke-width="1.6" fill="none"/><path d="M2.9 12.8 Q3.2 16.8 8 16.8" stroke="#fff" stroke-width="1.6" fill="none"/><path d="M10.8 17.2L14.2 9.2 17.6 17.2M12 15h4.4" stroke="#fff" stroke-width="1.6" fill="none"/></svg>
<div class="a" style="left:1872px;top:1100px;width:60px;height:36px;border-radius:18px 0 0 18px;background:#fff;box-shadow:0 2px 8px rgba(0,0,0,0.12)"></div>
<div class="a" style="left:1872px;top:1054px;width:36px;height:36px;border-radius:18px;background:rgba(255,255,255,0.85);box-shadow:0 2px 8px rgba(0,0,0,0.12)"></div>
<svg class="a" style="left:1882px;top:1064px" width="17" height="17" viewBox="0 0 17 17"><rect x="0.9" y="1.8" width="4.3" height="5" stroke="#8a8a8a" stroke-width="1.3" fill="none"/><rect x="0.9" y="10.6" width="4.3" height="4.8" stroke="#8a8a8a" stroke-width="1.3" fill="none"/><rect x="9.7" y="10.6" width="4.6" height="4.8" stroke="#8a8a8a" stroke-width="1.3" fill="none"/><path d="M12.3 -0.3 Q12.8 3.2 15.8 3.7 Q12.8 4.2 12.3 7.7 Q11.8 4.2 8.8 3.7 Q11.8 3.2 12.3 -0.3Z" fill="#8a8a8a"/></svg>
<div class="a" style="left:1876px;top:1104px;width:28px;height:28px;border-radius:14px;background:#ee95af"></div>
<svg class="a" style="left:1880px;top:1108px" width="20" height="20" viewBox="0 0 20 20"><path d="M3 5h5.8v2.8H3z" stroke="#fff" stroke-width="1.8" fill="none"/><path d="M6.2 2.1v9" stroke="#fff" stroke-width="1.4"/><path d="M12.2 3.6 Q16.6 3.4 17 7.2" stroke="#fff" stroke-width="1.6" fill="none"/><path d="M2.9 12.8 Q3.2 16.8 8 16.8" stroke="#fff" stroke-width="1.6" fill="none"/><path d="M10.8 17.2L14.2 9.2 17.6 17.2M12 15h4.4" stroke="#fff" stroke-width="1.6" fill="none"/></svg>
</body></html>
